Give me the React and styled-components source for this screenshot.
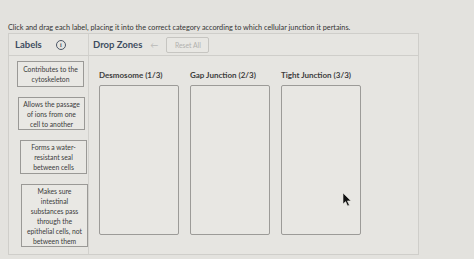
import React from "react";
import styled, { createGlobalStyle } from "styled-components";

const Global = createGlobalStyle`
  html, body { margin: 0; padding: 0; }
  body {
    background: #e3e2de;
    font-family: Lato, "Open Sans", "Liberation Sans", sans-serif;
    color: #3a3a3a;
    width: 474px;
    height: 259px;
    overflow: hidden;
  }
`;

const Page = styled.div`
  position: relative;
  padding: 24px 0 0 8px;
  height: 259px;
  box-sizing: border-box;
`;

const Instruction = styled.div`
  font-size: 7.3px;
  line-height: 8px;
  height: 9px;
  color: #343434;
  white-space: nowrap;
`;

const Panel = styled.div`
  width: 411px;
  height: 222px;
  box-sizing: border-box;
  border: 1px solid #cfceca;
  background: #e6e5e1;
  display: grid;
  grid-template-rows: 22px 1fr;
`;

const Header = styled.div`
  display: grid;
  grid-template-columns: 80px 1fr;
  border-bottom: 1px solid #cfceca;
`;

const HeaderCell = styled.div`
  display: flex;
  align-items: center;
  gap: ${(p) => p.$gap || 8}px;
  padding-left: ${(p) => p.$pl || 5}px;
  border-right: ${(p) => (p.$divider ? "1px solid #d2d1cd" : "none")};
`;

const HeaderTitle = styled.span`
  font-weight: 700;
  font-size: 9.5px;
  color: #3e4d60;
`;

const InfoIcon = styled.span`
  display: inline-flex;
  align-items: center;
  justify-content: center;
  width: 8px;
  height: 8px;
  border: 1px solid #4a5566;
  border-radius: 50%;
  font-size: 6px;
  font-weight: 700;
  color: #4a5566;
  font-family: "Liberation Serif", serif;
  margin-left: 6px;
`;

const BackArrow = styled.span`
  font-size: 8px;
  color: #b8b8b6;
  margin-left: 2px;
`;

const ResetButton = styled.button`
  font-family: inherit;
  font-size: 6.8px;
  color: #b2b1ae;
  background: #e8e7e3;
  border: 1px solid #c6c5c1;
  border-radius: 2px;
  width: 43px;
  height: 16px;
  padding: 0;
  margin-left: 2px;
`;

const Body = styled.div`
  display: grid;
  grid-template-columns: 80px 1fr;
`;

const LabelsColumn = styled.div`
  border-right: 1px solid #d2d1cd;
  padding: 5px 0 0 8px;
  display: flex;
  flex-direction: column;
  gap: 10px;
`;

const LabelCard = styled.div`
  width: 67px;
  box-sizing: border-box;
  border: 1px solid #9a9996;
  background: #e9e8e4;
  padding: ${(p) => p.$py}px 2px;
  font-size: 6.8px;
  line-height: 10px;
  text-align: center;
  color: #3c3c3c;
  white-space: nowrap;
  margin-left: ${(p) => p.$ml || 0}px;
`;

const ZonesArea = styled.div`
  display: flex;
  gap: 11px;
  padding: 15px 0 0 10px;
`;

const Zone = styled.div`
  display: flex;
  flex-direction: column;
  gap: 5px;
`;

const ZoneTitle = styled.div`
  font-weight: 700;
  font-size: 8px;
  line-height: 9px;
  color: #3d3d3d;
  white-space: nowrap;
`;

const ZoneBox = styled.div`
  width: 80px;
  height: 150px;
  box-sizing: border-box;
  border: 1px solid #9c9b98;
  border-radius: 2px;
  background: #e8e7e3;
`;

const Cursor = styled.svg`
  position: absolute;
  left: 342px;
  top: 192px;
  width: 10px;
  height: 15px;
`;

const labels = [
  { lines: ["Contributes to the", "cytoskeleton"], py: 2, ml: 0 },
  { lines: ["Allows the passage", "of ions from one", "cell to another"], py: 0.5, ml: 1 },
  { lines: ["Forms a water-", "resistant seal", "between cells"], py: 1, ml: 3 },
  {
    lines: ["Makes sure", "intestinal", "substances pass", "through the", "epithelial cells, not", "between them"],
    py: 0.5,
    ml: 4,
  },
];

const zones = ["Desmosome (1/3)", "Gap Junction (2/3)", "Tight Junction (3/3)"];

export default function App() {
  return (
    <>
      <Global />
      <Page>
        <Instruction>
          Click and drag each label, placing it into the correct category according to which cellular junction it pertains.
        </Instruction>
        <Panel>
          <Header>
            <HeaderCell $divider $pl={6}>
              <HeaderTitle>Labels</HeaderTitle>
              <InfoIcon>i</InfoIcon>
            </HeaderCell>
            <HeaderCell $pl={4} $gap={6}>
              <HeaderTitle>Drop Zones</HeaderTitle>
              <BackArrow>←</BackArrow>
              <ResetButton>Reset All</ResetButton>
            </HeaderCell>
          </Header>
          <Body>
            <LabelsColumn>
              {labels.map((l) => (
                <LabelCard key={l.lines[0]} $py={l.py} $ml={l.ml}>
                  {l.lines.map((line, i) => (
                    <React.Fragment key={i}>
                      {line}
                      {i < l.lines.length - 1 && <br />}
                    </React.Fragment>
                  ))}
                </LabelCard>
              ))}
            </LabelsColumn>
            <ZonesArea>
              {zones.map((z) => (
                <Zone key={z}>
                  <ZoneTitle>{z}</ZoneTitle>
                  <ZoneBox />
                </Zone>
              ))}
            </ZonesArea>
          </Body>
        </Panel>
        <Cursor viewBox="0 0 10 15">
          <path d="M1 1 L1 12 L3.6 9.6 L5.6 14 L7.4 13.2 L5.4 8.9 L9 8.9 Z" fill="#111" stroke="#e6e5e1" strokeWidth="0.6" />
        </Cursor>
      </Page>
    </>
  );
}
